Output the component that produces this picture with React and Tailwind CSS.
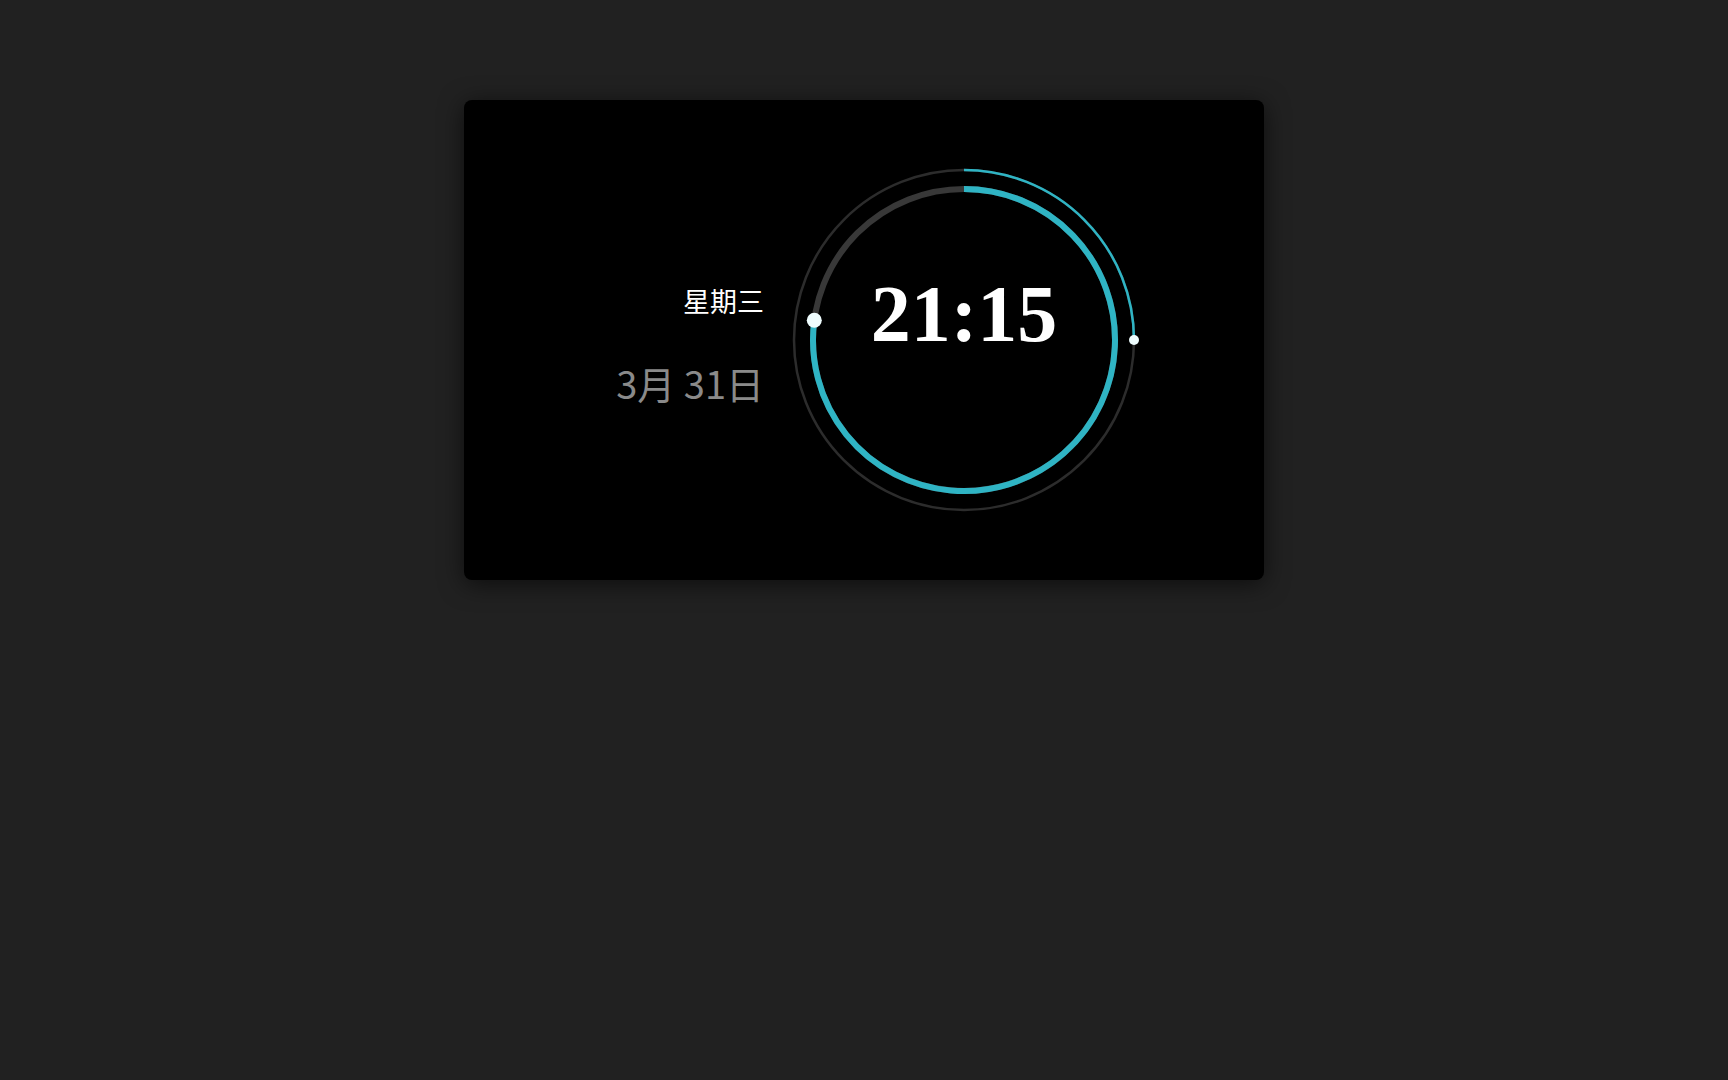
import React from "react";

const CX = 180;
const CY = 180;
const R_OUT = 170;
const R_IN = 151;

function pointAt(r, deg) {
  const a = ((deg - 90) * Math.PI) / 180;
  return [CX + r * Math.cos(a), CY + r * Math.sin(a)];
}

function arcPath(r, deg) {
  const [sx, sy] = pointAt(r, 0);
  const [ex, ey] = pointAt(r, deg);
  const large = deg > 180 ? 1 : 0;
  return `M ${sx} ${sy} A ${r} ${r} 0 ${large} 1 ${ex} ${ey}`;
}

export default function App() {
  const hours = 21;
  const minutes = 15;
  const minDeg = (minutes / 60) * 360;
  const hourDeg = (((hours % 12) + minutes / 60) / 12) * 360;
  const [ox, oy] = pointAt(R_OUT, minDeg);
  const [ix, iy] = pointAt(R_IN, hourDeg);

  return (
    <div className="min-h-screen w-full bg-[#212121] pt-[100px]">
      <div className="mx-auto flex h-[480px] w-[800px] items-center justify-center gap-[20px] rounded-[8px] bg-black shadow-[0_4px_24px_rgba(0,0,0,0.6)]">
        <div
          className="flex w-[180px] flex-col items-end pt-[10px] text-right"
          style={{ fontFamily: '"Noto Sans CJK SC", "Noto Sans", sans-serif' }}
        >
          <div className="text-[27px] leading-[34px] text-white">星期三</div>
          <div className="mt-[42px] text-[38px] leading-[46px] text-[#8a8a8a]">3月 31日</div>
        </div>
        <div className="relative h-[360px] w-[360px]">
          <svg width="360" height="360" viewBox="0 0 360 360" className="absolute inset-0">
            <circle cx={CX} cy={CY} r={R_OUT} fill="none" stroke="#2c2c2c" strokeWidth="2.5" />
            <circle cx={CX} cy={CY} r={R_IN} fill="none" stroke="#383838" strokeWidth="6" />
            <path d={arcPath(R_OUT, minDeg)} fill="none" stroke="#2fb4c4" strokeWidth="2.5" />
            <path d={arcPath(R_IN, hourDeg)} fill="none" stroke="#2fb4c4" strokeWidth="6" />
            <circle cx={ox} cy={oy} r="5" fill="#eefcfd" />
            <circle cx={ix} cy={iy} r="7.5" fill="#eefcfd" />
          </svg>
          <div
            className="absolute left-0 right-0 top-[114px] text-center text-[80px] font-bold leading-[80px] text-white"
            style={{ fontFamily: '"Liberation Serif", "Times New Roman", serif' }}
          >
            21:15
          </div>
        </div>
      </div>
    </div>
  );
}
